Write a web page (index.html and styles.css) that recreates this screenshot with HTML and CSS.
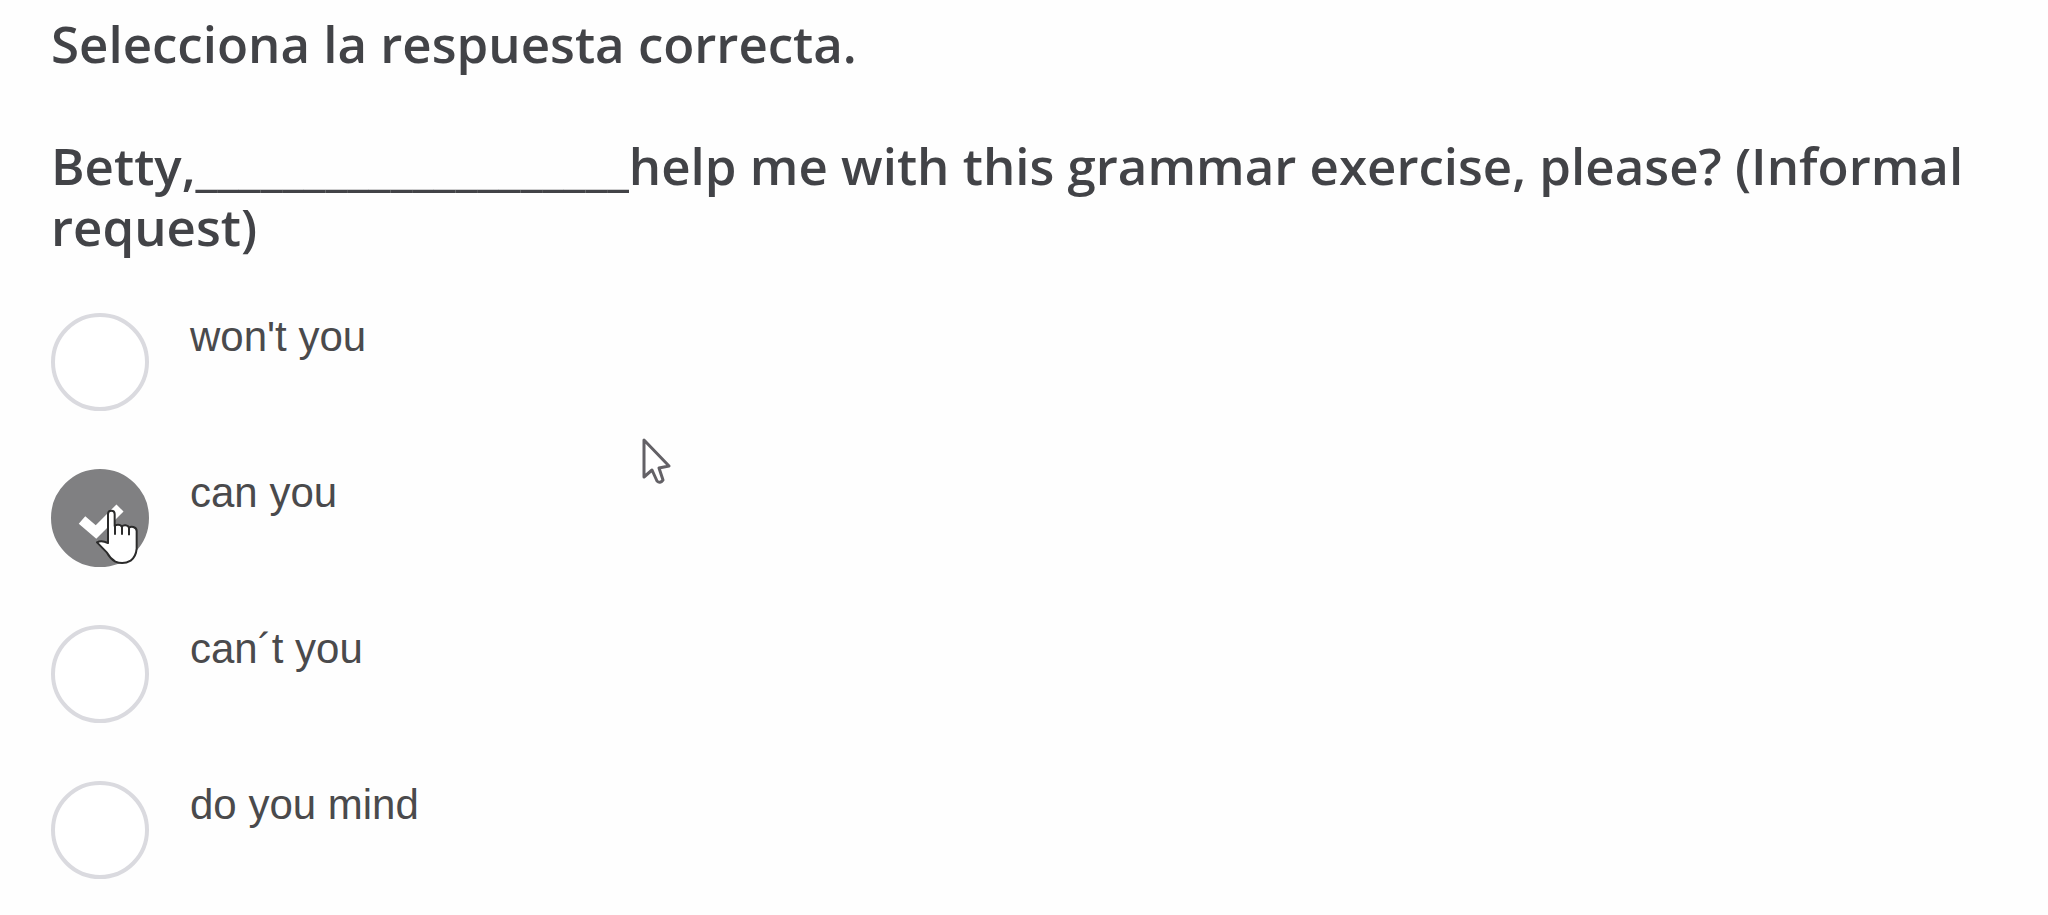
FILE: index.html
```
<!DOCTYPE html>
<html lang="es">
<head>
  <meta charset="UTF-8">
  <meta name="viewport" content="width=device-width, initial-scale=1.0">
  <title>Selecciona la respuesta correcta</title>
  <link rel="stylesheet" href="styles.css">
</head>
<body>
  <form class="question">
    <!-- Question -->
    <h1>Selecciona la respuesta correcta.</h1>
    <h2 id="prompt">Betty,____________________help me with this grammar exercise, please? (Informal request)</h2>

    <!-- Answers -->
    <div class="options" role="radiogroup" aria-labelledby="prompt">
      <div class="option">
        <input type="radio" name="answer" id="answer-1">
        <label for="answer-1">won't you</label>
      </div>
      <div class="option">
        <input type="radio" name="answer" id="answer-2" checked>
        <label for="answer-2">can you</label>
        <svg class="check" viewBox="0 0 98 98" aria-hidden="true">
          <path d="M31 51 L45 63 L69 39" fill="none" stroke="#fff" stroke-width="10"/>
        </svg>
        <svg class="hand" viewBox="165 143 135 171" aria-hidden="true">
          <path d="M204 245 V158 Q204 148 214 148 Q224 148 224 158 V194 Q226 190 234 190 Q243 190 245 196 Q250 191 257 192 Q265 193 267 199 Q272 195 280 197 Q290 200 290 209 V262 Q288 286 272 298 Q250 311 226 301 Q211 292 201 274 L171 243 Q184 236 204 245 Z" fill="#fff" stroke="#2b2b2b" stroke-width="6" stroke-linejoin="round"/>
          <path d="M225 192 V220 M246 196 V220 M267 199 V222" fill="none" stroke="#2b2b2b" stroke-width="6"/>
        </svg>
      </div>
      <div class="option">
        <input type="radio" name="answer" id="answer-3">
        <label for="answer-3">can´t you</label>
      </div>
      <div class="option">
        <input type="radio" name="answer" id="answer-4">
        <label for="answer-4">do you mind</label>
      </div>
    </div>
  </form>

  <svg class="pointer" viewBox="0 0 32 48" aria-hidden="true">
    <path d="M3 3 V40 L11 33 L16 44 Q19 47 22 43 L18 31 L28 29 Z" fill="#fff" stroke="#636166" stroke-width="3" stroke-linejoin="round"/>
  </svg>
</body>
</html>
```
FILE: styles.css
```
/* General Styles */
body {
  font-family: 'Liberation Sans', Arial, sans-serif;
  background: #fefefe;
  margin: 0;
  color: #4a4a4c;
}

.question {
  padding: 13px 51px;
}

/* Question */
h1,
h2 {
  font-family: 'Open Sans', sans-serif;
  font-size: 51px;
  font-weight: 600;
  line-height: 61px;
  margin: 0;
  color: #424347;
}

h2 {
  margin-top: 61px;
}

/* Answers */
.options {
  display: flex;
  flex-direction: column;
  gap: 58px;
  margin-top: 56px;
}

.option {
  display: flex;
  align-items: flex-start;
  gap: 41px;
  position: relative;
}

.option input {
  appearance: none;
  flex: none;
  width: 98px;
  height: 98px;
  margin: 0;
  border: 4px solid #dadadf;
  border-radius: 50%;
  background: #fff;
  cursor: pointer;
}

.option input:checked {
  border-color: #808082;
  background: #808082;
}

.option label {
  font-size: 42px;
  line-height: 48px;
  cursor: pointer;
}

.check {
  position: absolute;
  top: 0;
  left: 0;
  width: 98px;
  height: 98px;
  pointer-events: none;
}

/* Mouse pointers */
.hand {
  position: absolute;
  top: 40px;
  left: 44px;
  width: 45px;
  height: 57px;
  pointer-events: none;
}

.pointer {
  position: absolute;
  top: 437px;
  left: 641px;
  width: 32px;
  height: 48px;
  pointer-events: none;
}
```
